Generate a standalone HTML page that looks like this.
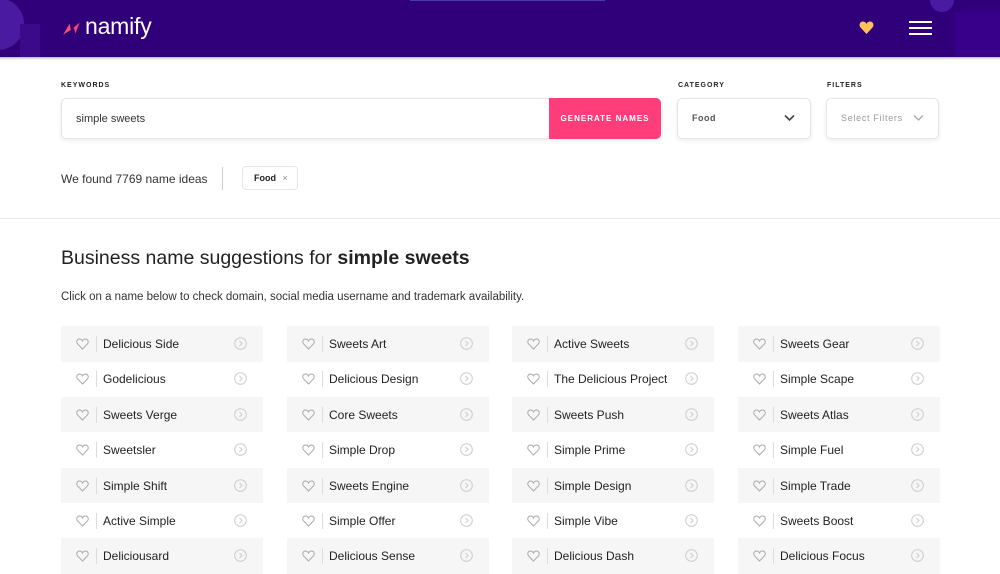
<!DOCTYPE html>
<html><head><meta charset="utf-8"><style>
*{margin:0;padding:0;box-sizing:border-box}
body{width:1000px;height:569px;overflow:hidden;background:#fff;font-family:"Liberation Sans",sans-serif;color:#222;position:relative}
.hdr{position:absolute;left:0;top:0;width:1000px;height:57px;background:#30007a;overflow:hidden}
.hdr .c1{position:absolute;left:-28px;top:-2px;width:52px;height:52px;border-radius:50%;background:#4a1aa0}
.hdr .sq1{position:absolute;left:20px;top:24px;width:20px;height:33px;background:#3a0a8a}
.hdr .r{position:absolute;left:955px;top:12px;width:45px;height:45px;background:#38008a}
.hdr .c2{position:absolute;left:930px;top:-12px;width:24px;height:24px;border-radius:50%;background:#4a1aa0}
.hdr .bar{position:absolute;left:410px;top:0;width:195px;height:1px;background:#4a3ab0}
.shadow{position:absolute;left:0;top:57px;width:1000px;height:3px;background:linear-gradient(#bbb,#fff)}
.logo{position:absolute;left:85px;top:13px;color:#fff;font-size:23px;font-weight:normal;letter-spacing:-.2px}
.lbl{position:absolute;top:82px;font-size:7px;font-weight:bold;letter-spacing:1px;color:#222}
.box{position:absolute;top:98px;height:41px;border:1px solid #e6e6e6;border-radius:5px;background:#fff;box-shadow:0 2px 5px rgba(0,0,0,.07)}
.gen{position:absolute;left:549px;top:98px;width:112px;height:41px;background:#ff3d7a;border-radius:0 5px 5px 0;color:#fff;font-size:8px;font-weight:bold;letter-spacing:1px;text-align:center;line-height:41px}
.row{position:absolute;height:35.5px;width:202px;font-size:12px;color:#222}
.row.g{background:#f6f6f6}
.row svg.h{position:absolute;left:15px;top:12px}
.row .sep{position:absolute;left:35px;top:10px;width:1px;height:16px;background:#ddd}
.row .t{position:absolute;left:42px;top:11px}
.row svg.a{position:absolute;left:173px;top:11px}
</style></head><body>
<div class="hdr"><div class="c1"></div><div class="sq1"></div><div class="bar"></div><div class="c2"></div><div class="r"></div>
<svg style="position:absolute;left:62px;top:20px" width="22" height="16" viewBox="0 0 20 14"><path d="M1 13 L7 3 L8 9 L16 2 L12 12 L11 7 Z" fill="#ff4d6d"/></svg>
<div class="logo">namify</div>
<svg style="position:absolute;left:859px;top:21px" width="15" height="14" viewBox="0 0 15 14"><path d="M7.5 13 L1.5 6.5 C-0.5 4 1 0.5 4 0.5 C5.8 0.5 7 1.8 7.5 3 C8 1.8 9.2 0.5 11 0.5 C14 0.5 15.5 4 13.5 6.5 Z" fill="#ffc35a"/></svg>
<div style="position:absolute;left:909px;top:21px;width:23px;height:2px;background:#fff"></div>
<div style="position:absolute;left:909px;top:27px;width:23px;height:2px;background:#fff"></div>
<div style="position:absolute;left:909px;top:33px;width:23px;height:2px;background:#fff"></div>
</div>
<div class="shadow"></div>
<div class="lbl" style="left:61px">KEYWORDS</div>
<div class="lbl" style="left:678px">CATEGORY</div>
<div class="lbl" style="left:827px">FILTERS</div>
<div class="box" style="left:61px;width:600px"><span style="position:absolute;left:14px;top:14px;font-size:11px;color:#333">simple sweets</span></div>
<div class="gen">GENERATE NAMES</div>
<div class="box" style="left:677px;width:134px"><span style="position:absolute;left:14px;top:14px;font-size:9px;font-weight:bold;color:#555;letter-spacing:.5px">Food</span>
<svg style="position:absolute;left:106px;top:15px" width="11" height="8"><path d="M1 1.5 L5.5 6 L10 1.5" stroke="#444" stroke-width="1.6" fill="none"/></svg></div>
<div class="box" style="left:826px;width:113px"><span style="position:absolute;left:14px;top:14px;font-size:9px;color:#999;letter-spacing:.7px">Select Filters</span>
<svg style="position:absolute;left:86px;top:15px" width="11" height="8"><path d="M1 1.5 L5.5 6 L10 1.5" stroke="#aaa" stroke-width="1.3" fill="none"/></svg></div>
<div style="position:absolute;left:61px;top:172px;font-size:12px;color:#333">We found 7769 name ideas</div>
<div style="position:absolute;left:222px;top:167px;width:1px;height:23px;background:#ccc"></div>
<div style="position:absolute;left:242px;top:166px;width:56px;height:24px;border:1px solid #e5e5e5;border-radius:4px;font-size:9px;font-weight:bold;line-height:22px;padding-left:11px">Food <span style="color:#888;font-weight:normal;margin-left:4px">×</span></div>
<div style="position:absolute;left:0;top:218px;width:1000px;height:1px;background:#e8e8e8"></div>
<div style="position:absolute;left:61px;top:247px;font-size:19.5px;color:#222">Business name suggestions for <b>simple sweets</b></div>
<div style="position:absolute;left:61px;top:291px;font-size:11.5px;color:#333">Click on a name below to check domain, social media username and trademark availability.</div>
<div id="grid"></div>
<script>
var cols=[["Delicious Side","Godelicious","Sweets Verge","Sweetsler","Simple Shift","Active Simple","Deliciousard"],
["Sweets Art","Delicious Design","Core Sweets","Simple Drop","Sweets Engine","Simple Offer","Delicious Sense"],
["Active Sweets","The Delicious Project","Sweets Push","Simple Prime","Simple Design","Simple Vibe","Delicious Dash"],
["Sweets Gear","Simple Scape","Sweets Atlas","Simple Fuel","Simple Trade","Sweets Boost","Delicious Focus"]];
var xs=[61,287,512,738],h='';
for(var c=0;c<4;c++)for(var r=0;r<7;r++){
h+='<div class="row'+(r%2==0?' g':'')+'" style="left:'+xs[c]+'px;top:'+(326+r*35.4)+'px">'+
'<svg class="h" width="13" height="12" viewBox="0 0 13 12"><path d="M6.5 11 L1.5 5.8 C0 4 1 1 3.5 1 C5 1 6 2 6.5 3 C7 2 8 1 9.5 1 C12 1 13 4 11.5 5.8 Z" fill="none" stroke="#aaa" stroke-width="1"/></svg>'+
'<div class="sep"></div><div class="t">'+cols[c][r]+'</div>'+
'<svg class="a" width="13" height="13" viewBox="0 0 13 13"><circle cx="6.5" cy="6.5" r="5.8" fill="none" stroke="#ccc"/><path d="M5.5 4 L8 6.5 L5.5 9" fill="none" stroke="#ccc"/></svg></div>';}
document.getElementById('grid').innerHTML=h;
</script>
</body></html>
